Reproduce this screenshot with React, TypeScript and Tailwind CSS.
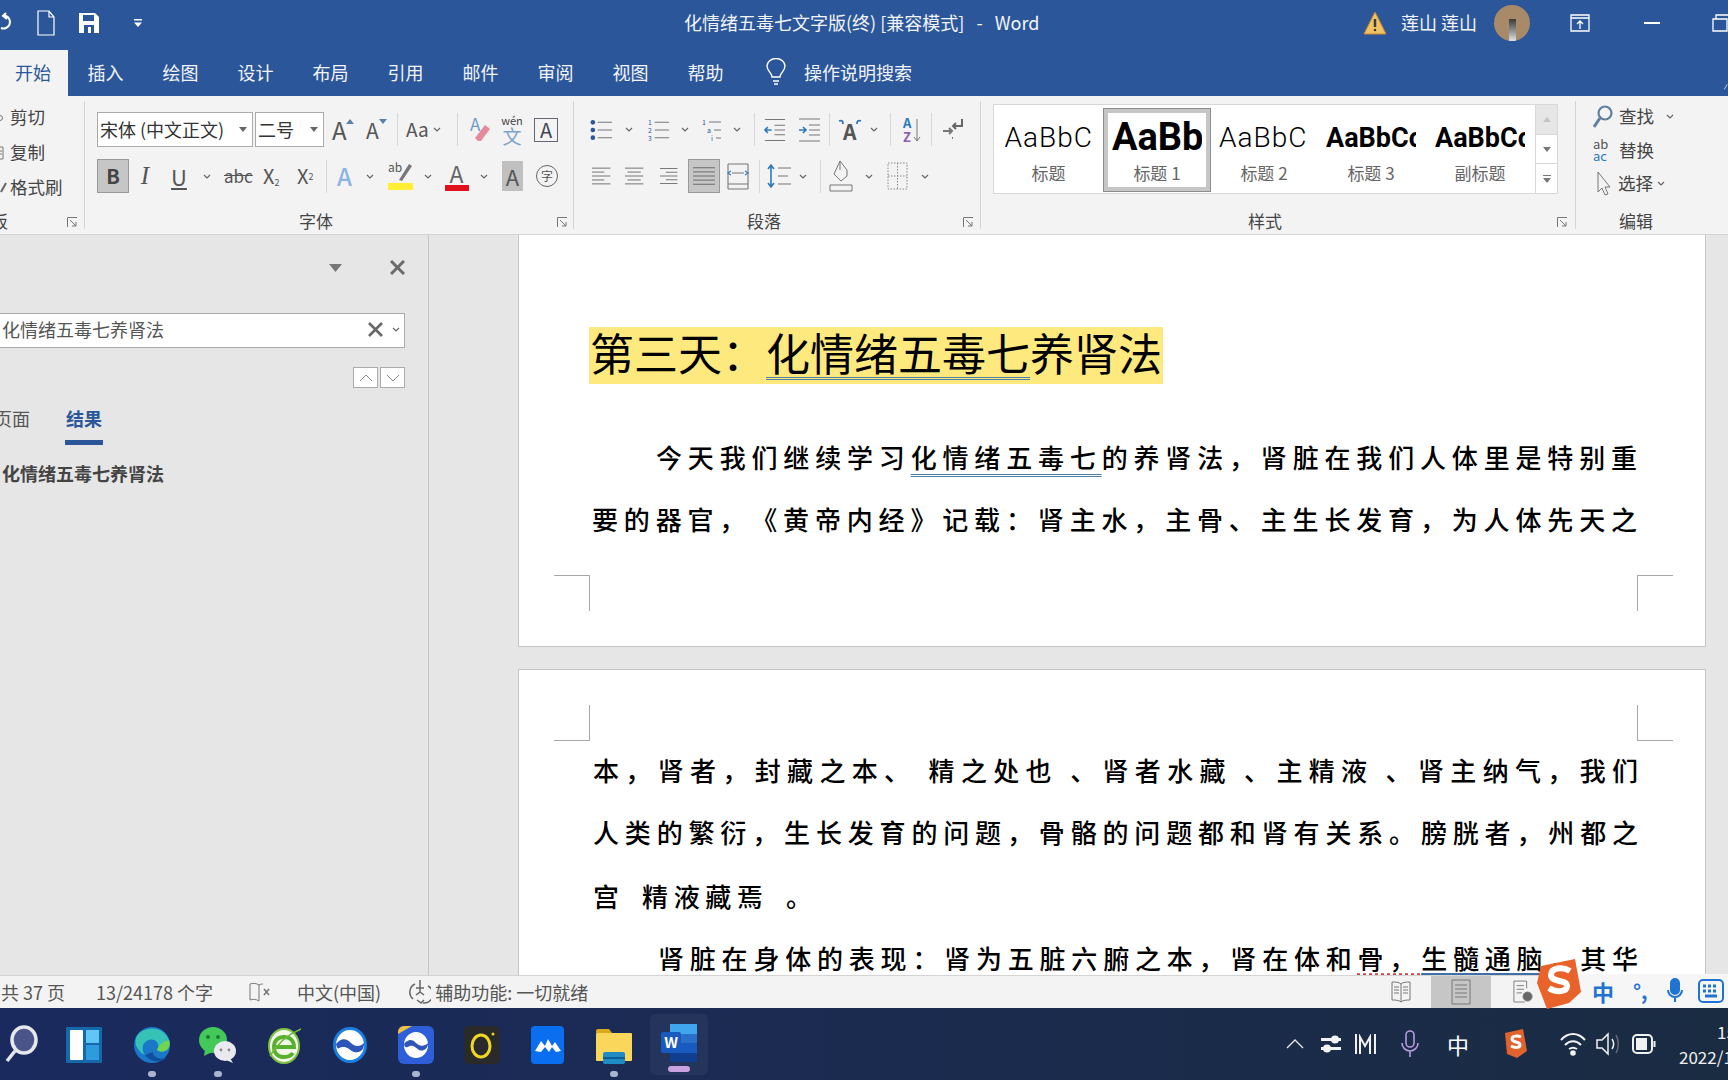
import type { ReactNode } from 'react'

const TABS = ['插入', '绘图', '设计', '布局', '引用', '邮件', '审阅', '视图', '帮助']

function Chev({ className = '' }: { className?: string }) {
  return (
    <svg viewBox="0 0 8 5" className={`h-[5px] w-[8px] shrink-0 ${className}`} fill="none" stroke="#666" strokeWidth="1.2">
      <path d="M1 1l3 3 3-3" />
    </svg>
  )
}

function Sep({ className = '' }: { className?: string }) {
  return <div className={`h-[33px] w-px shrink-0 bg-[#d8d8d8] ${className}`} />
}

function Launcher({ className = '' }: { className?: string }) {
  return (
    <svg viewBox="0 0 11 11" className={`absolute bottom-[6px] h-[11px] w-[11px] ${className}`} fill="none" stroke="#777" strokeWidth="1">
      <path d="M.5 10V.5H10M3 3l6 6M9 5v4H5" />
    </svg>
  )
}

function GroupLabel({ children, className = '' }: { children: ReactNode; className?: string }) {
  return <div className={`mt-auto h-[28px] text-[17px] leading-[30px] text-[#444] ${className}`}>{children}</div>
}

// rows of short lines, used for all the paragraph buttons
function Lines({ rows, className = '', x = 0 }: { rows: number[][]; className?: string; x?: number }) {
  return (
    <svg viewBox="0 0 24 22" className={`h-[22px] shrink-0 ${className}`} fill="none" stroke="#6e6e6e" strokeWidth="1.1">
      {rows.map(([a, b], i) => (
        <path key={i} d={`M${a + x} ${2 + i * (18 / (rows.length - 1))}H${b + x}`} />
      ))}
    </svg>
  )
}

function ListIcon({ kind }: { kind: 'b' | 'n' | 'm' }) {
  return (
    <svg viewBox="0 0 24 26" className="h-[26px] w-full" fill="none" stroke="#777" strokeWidth="1.1">
      {kind === 'm' ? (
        <>
          <path d="M7 5h12M12 13h7M14 21h5" />
          <text x="0" y="8" fontSize="7" fill="#2b579a" stroke="none">1</text>
          <text x="5" y="16" fontSize="7" fill="#2b579a" stroke="none">a</text>
          <text x="9" y="24" fontSize="7" fill="#2b579a" stroke="none">i</text>
        </>
      ) : (
        <>
          <path d="M8 5h15M8 13h15M8 21h15" />
          {kind === 'b' ? (
            <g fill="#2b579a" stroke="none">
              <circle cx="3" cy="5" r="2.4" />
              <circle cx="3" cy="13" r="2.4" />
              <circle cx="3" cy="21" r="2.4" />
            </g>
          ) : (
            <g fill="#2b579a" stroke="none" fontSize="7">
              <text x="1" y="8">1</text>
              <text x="1" y="16">2</text>
              <text x="1" y="24">3</text>
            </g>
          )}
        </>
      )}
    </svg>
  )
}

function IndentIcon({ dir }: { dir: 'l' | 'r' }) {
  return (
    <svg viewBox="0 0 24 26" className="h-[26px] w-full" fill="none" stroke="#777" strokeWidth="1.1">
      <path d="M2 2h21M12 8h11M12 13h11M12 18h11M2 24h21" />
      {dir === 'l' ? (
        <path d="M9 13H2m3-3-3 3 3 3" stroke="#2b78c0" strokeWidth="1.6" />
      ) : (
        <path d="M2 13h7m-3-3 3 3-3 3" stroke="#2b78c0" strokeWidth="1.6" />
      )}
    </svg>
  )
}

function Corner({ className = '', edges }: { className?: string; edges: string }) {
  return <div className={`absolute h-[36px] w-[36px] border-[#a8a8a8] ${edges} ${className}`} />
}

function Gallery({ sample, label, selected, w, className = '' }: { sample: string; label: string; selected?: boolean; w: string; className?: string }) {
  return (
    <div className={`flex flex-col items-center overflow-hidden ${w} ${selected ? 'my-[3px] h-[84px] border-[1px] border-[#8d8d8d] outline-[4px] -outline-offset-[5px] outline-[#c6c6c6]' : 'h-[90px]'}`}>
      <div className={`flex w-[90px] items-center justify-center overflow-hidden whitespace-nowrap text-black font-['Roboto',sans-serif] ${selected ? 'mt-[7px] h-[42px]' : 'mt-[10px] h-[46px]'} ${className}`}>
        <span className="w-[90px] overflow-hidden text-left">{sample}</span>
      </div>
      <div className={`text-[17px] leading-[24px] text-[#666] ${selected ? 'mt-[3px]' : 'mt-0'}`}>{label}</div>
    </div>
  )
}

function TaskDot({ show }: { show?: boolean }) {
  return <div className={`mt-[7px] h-[6px] w-[8px] rounded-full ${show ? 'bg-[#a9b4cf]' : 'bg-transparent'}`} />
}

function TaskItem({ children, dot, wide }: { children: ReactNode; dot?: boolean; wide?: boolean }) {
  return (
    <div className={`flex h-[72px] flex-col items-center pt-[18px] ${wide ? 'w-[68px] pr-[2px]' : 'w-[66px]'}`}>
      <div className="flex h-[38px] w-[38px] items-center justify-center">{children}</div>
      <TaskDot show={dot} />
    </div>
  )
}

function Ribbon() {
  return (
    <div className="flex h-[139px] border-b border-[#d4d4d4] bg-[#f3f3f3] text-[#444]">
      {/* clipboard */}
      <div className="relative flex w-[84px] flex-col">
        <div className="mt-[4px] flex flex-col">
          <div className="flex h-[35px] items-center pl-[10px] text-[17.5px]">
            <svg viewBox="0 0 4 8" className="absolute left-0 h-[8px] w-[4px]" fill="none" stroke="#777"><circle cx="0" cy="4" r="2.5" /></svg>
            剪切
          </div>
          <div className="flex h-[35px] items-center pl-[10px] text-[17.5px]">
            <svg viewBox="0 0 4 14" className="absolute left-0 h-[14px] w-[4px]" fill="none" stroke="#777"><path d="M0 1h3v12H0M0 5h2M0 8h2" /></svg>
            复制
          </div>
          <div className="flex h-[35px] items-center pl-[10px] text-[17.5px]">
            <svg viewBox="0 0 7 12" className="absolute left-0 h-[12px] w-[7px]" fill="none" stroke="#666" strokeWidth="2"><path d="M6 1 1 10" /></svg>
            格式刷
          </div>
        </div>
        <GroupLabel className="-ml-[26px]">贴板</GroupLabel>
        <Launcher className="right-[6px]" />
      </div>
      <div className="my-[5px] w-px bg-[#d4d4d4]" />

      {/* font */}
      <div className="relative flex w-[488px] flex-col pt-[16px]">
        <div className="flex h-[35px] items-center pl-[12px]">
          <div className="flex h-[35px] w-[156px] shrink-0 items-center justify-between border border-[#ababab] bg-white pl-[2px] pr-[5px] text-[18px] text-[#333]">
            <span className="whitespace-nowrap">宋体 (中文正文)</span>
            <svg viewBox="0 0 8 5" className="h-[5px] w-[8px]" fill="#666"><path d="M0 0h8L4 5z" /></svg>
          </div>
          <div className="ml-[2px] flex h-[35px] w-[69px] shrink-0 items-center justify-between border border-[#ababab] bg-white pl-[2px] pr-[5px] text-[18px] text-[#333]">
            <span>二号</span>
            <svg viewBox="0 0 8 5" className="h-[5px] w-[8px]" fill="#666"><path d="M0 0h8L4 5z" /></svg>
          </div>
          <div className="relative ml-[8px] w-[26px] text-[24px] leading-[30px] text-[#555]">
            A<svg viewBox="0 0 8 5" className="absolute left-[14px] top-[4px] h-[5px] w-[8px]" fill="#5a7fa8"><path d="M4 0l4 5H0z" /></svg>
          </div>
          <div className="relative ml-[8px] w-[22px] text-[21px] leading-[30px] text-[#555]">
            A<svg viewBox="0 0 8 5" className="absolute left-[13px] top-[4px] h-[5px] w-[8px]" fill="#5a7fa8"><path d="M0 0h8L4 5z" /></svg>
          </div>
          <Sep className="ml-[9px]" />
          <div className="ml-[8px] flex w-[37px] items-center gap-[4px] text-[19px] text-[#555]">
            <span>Aa</span>
            <Chev />
          </div>
          <Sep className="ml-[14px]" />
          <svg viewBox="0 0 22 28" className="ml-[11px] h-[28px] w-[22px] shrink-0">
            <text x="1" y="15" fontSize="17" fill="#6f9bc9">A</text>
            <path d="M6 22 16 9l5 4-9 12H9z" fill="#e58a9c" />
          </svg>
          <div className="ml-[10px] flex w-[22px] flex-col items-center leading-none">
            <span className="text-[11px] text-[#444]">wén</span>
            <span className="text-[19px] leading-[19px] text-[#7ba3cc]">文</span>
          </div>
          <div className="ml-[11px] flex h-[24px] w-[24px] items-center justify-center border border-[#667] text-[20px] text-[#445]">A</div>
        </div>
        <div className="mt-[12px] flex h-[34px] items-center pl-[12px] text-[#555]">
          <div className="flex h-[34px] w-[32px] shrink-0 items-center justify-center border border-[#999] bg-[#c6c6c6] text-[20px] font-bold text-[#444]">B</div>
          <div className="ml-[8px] w-[16px] text-center font-['Liberation_Serif',serif] text-[25px] italic">I</div>
          <div className="ml-[18px] w-[16px] text-center text-[22px] underline underline-offset-2">U</div>
          <Chev className="ml-[16px]" />
          <div className="ml-[13px] w-[25px] text-center text-[17px] line-through">abc</div>
          <div className="ml-[14px] w-[20px] text-[20px]">X<sub className="text-[9px]">2</sub></div>
          <div className="ml-[14px] w-[20px] text-[20px]">X<sup className="text-[9px]">2</sup></div>
          <Sep className="ml-[9px]" />
          <div className="ml-[10px] w-[19px] text-[24px] font-medium text-[#8cb5e4]">A</div>
          <Chev className="ml-[10px]" />
          <svg viewBox="0 0 25 34" className="ml-[14px] h-[34px] w-[25px] shrink-0">
            <text x="0" y="13" fontSize="12" fill="#555">ab</text>
            <path d="M11 21 21 5l3 2-10 15z" fill="#777" />
            <rect x="0" y="24" width="25" height="7" fill="#ffee33" />
          </svg>
          <Chev className="ml-[11px]" />
          <div className="ml-[12px] flex w-[25px] flex-col items-center">
            <span className="text-[23px] leading-[24px] text-[#666]">A</span>
            <span className="h-[6px] w-[24px] bg-[#e0101c]" />
          </div>
          <Chev className="ml-[11px]" />
          <div className="ml-[14px] flex h-[30px] w-[21px] items-center justify-center bg-[#c0c0c0] text-[22px] text-[#555]">A</div>
          <div className="ml-[13px] flex h-[22px] w-[22px] items-center justify-center rounded-full border border-[#666] text-[12px]">字</div>
        </div>
        <GroupLabel className="pr-[26px] text-center">字体</GroupLabel>
        <Launcher className="right-[5px]" />
      </div>
      <div className="my-[5px] w-px bg-[#d4d4d4]" />

      {/* paragraph */}
      <div className="relative flex w-[406px] flex-col pt-[16px]">
        <div className="flex h-[35px] items-center pl-[16px]">
          <div className="w-[23px]"><ListIcon kind="b" /></div>
          <Chev className="ml-[12px]" />
          <div className="ml-[14px] w-[23px]"><ListIcon kind="n" /></div>
          <Chev className="ml-[11px]" />
          <div className="ml-[13px] w-[24px]"><ListIcon kind="m" /></div>
          <Chev className="ml-[7px]" />
          <Sep className="ml-[13px]" />
          <div className="ml-[8px] w-[23px]"><IndentIcon dir="l" /></div>
          <div className="ml-[11px] w-[24px]"><IndentIcon dir="r" /></div>
          <Sep className="ml-[8px]" />
          <svg viewBox="0 0 26 24" className="ml-[7px] h-[24px] w-[26px] shrink-0">
            <text x="6" y="22" fontSize="21" fontWeight="700" fill="#555">A</text>
            <path d="M2 3c3-1 4 0 4 3M24 3c-3-1-4 0-4 3" fill="none" stroke="#2b78c0" strokeWidth="1.8" />
          </svg>
          <Chev className="ml-[7px]" />
          <Sep className="ml-[12px]" />
          <svg viewBox="0 0 20 30" className="ml-[11px] h-[30px] w-[20px] shrink-0">
            <text x="1" y="13" fontSize="13" fontWeight="700" fill="#2b78c0">A</text>
            <text x="1" y="27" fontSize="13" fontWeight="700" fill="#8a5fb0">Z</text>
            <path d="M15 4v22m-3-4 3 4 3-4" fill="none" stroke="#777" />
          </svg>
          <Sep className="ml-[9px]" />
          <svg viewBox="0 0 21 26" className="ml-[10px] h-[26px] w-[21px] shrink-0" fill="none" stroke="#666" strokeWidth="2">
            <path d="M20 2v7H11m3-3-3 3 3 3" />
            <path d="M1 14h9m-3-3 3 3-3 3M11 21h-1" stroke="#777" />
          </svg>
        </div>
        <div className="mt-[12px] flex h-[34px] items-center pl-[18px]">
          <Lines className="w-[21px]" rows={[[0, 21], [0, 14], [0, 21], [0, 14], [0, 21]]} />
          <Lines className="ml-[12px] w-[21px]" rows={[[0, 21], [3, 18], [0, 21], [3, 18], [0, 21]]} />
          <Lines className="ml-[14px] w-[20px]" rows={[[0, 21], [7, 21], [0, 21], [7, 21], [0, 21]]} />
          <div className="ml-[8px] flex h-[34px] w-[32px] shrink-0 items-center justify-center border border-[#999] bg-[#c6c6c6]">
            <Lines className="w-[22px]" rows={[[0, 24], [0, 24], [0, 24], [0, 24], [0, 24]]} />
          </div>
          <svg viewBox="0 0 22 28" className="ml-[7px] h-[28px] w-[22px] shrink-0" fill="none" stroke="#777" strokeWidth="1.1">
            <path d="M1 2h20M1 27h20M1 2v25M21 2v25M1 22h20M5 11h12" />
            <path d="M4 9 1 11l3 2M18 9l3 2-3 2" stroke="#2b78c0" />
          </svg>
          <Sep className="ml-[10px]" />
          <svg viewBox="0 0 24 28" className="ml-[7px] h-[28px] w-[24px] shrink-0" fill="none" stroke="#777" strokeWidth="1.1">
            <path d="M11 6h13M11 14h10M11 22h13" />
            <path d="M4 3v22M1 7l3-4 3 4M1 21l3 4 3-4" stroke="#2b78c0" strokeWidth="1.6" />
          </svg>
          <Chev className="ml-[8px]" />
          <Sep className="ml-[13px]" />
          <svg viewBox="0 0 24 32" className="ml-[8px] h-[32px] w-[24px] shrink-0" fill="none" stroke="#777">
            <path d="M11 1l7 9v6l-6 5-7-7z" />
            <path d="M11 1v9" />
            <path d="M1 25h22v6H1z" fill="#f3f3f3" />
          </svg>
          <Chev className="ml-[12px]" />
          <svg viewBox="0 0 21 28" className="ml-[14px] h-[28px] w-[21px] shrink-0" fill="none" stroke="#888" strokeDasharray="1.5 1.5">
            <path d="M1 1h19v26H1zM10.5 1v26M1 14h19" />
          </svg>
          <Chev className="ml-[13px]" />
        </div>
        <GroupLabel className="pr-[26px] text-center">段落</GroupLabel>
        <Launcher className="right-[6px]" />
      </div>
      <div className="my-[5px] w-px bg-[#d4d4d4]" />

      {/* styles */}
      <div className="relative flex w-[594px] flex-col pl-[12px] pt-[8px]">
        <div className="flex h-[90px] w-[565px] border border-[#d8d8d8] bg-white">
          <Gallery w="w-[109px]" sample="AaBbC" label="标题" className="pl-[1px] text-[28px] font-light tracking-[1px]" />
          <Gallery w="w-[108px]" sample="AaBbb" label="标题 1" selected className="text-[38px] font-bold" />
          <Gallery w="w-[106px]" sample="AaBbC" label="标题 2" className="text-[28px] font-light tracking-[1px]" />
          <Gallery w="w-[108px]" sample="AaBbCc" label="标题 3" className="text-[27px] font-bold" />
          <Gallery w="w-[110px]" sample="AaBbCc" label="副标题" className="text-[27px] font-bold" />
          <div className="ml-auto flex w-[22px] flex-col border-l border-[#d8d8d8]">
            <div className="flex flex-1 items-center justify-center bg-[#e6e6e6]">
              <svg viewBox="0 0 8 5" className="h-[5px] w-[8px]" fill="#c4c4c4"><path d="M4 0l4 5H0z" /></svg>
            </div>
            <div className="flex flex-1 items-center justify-center border-y border-[#d8d8d8]">
              <svg viewBox="0 0 8 5" className="h-[5px] w-[8px]" fill="#777"><path d="M0 0h8L4 5z" /></svg>
            </div>
            <div className="flex flex-1 items-center justify-center">
              <svg viewBox="0 0 8 8" className="h-[8px] w-[8px]" fill="#777"><path d="M0 0h8v1H0zM0 3h8L4 8z" /></svg>
            </div>
          </div>
        </div>
        <GroupLabel className="pr-[38px] text-center">样式</GroupLabel>
        <Launcher className="right-[7px]" />
      </div>
      <div className="my-[5px] w-px bg-[#d4d4d4]" />

      {/* editing */}
      <div className="flex w-[124px] flex-col pt-[4px]">
        <div className="flex h-[33px] items-center pl-[17px] text-[17.5px]">
          <svg viewBox="0 0 20 24" className="h-[24px] w-[20px] shrink-0" fill="none" stroke="#5f7f9f" strokeWidth="2.2"><circle cx="12" cy="8" r="6.5" /><path d="M7 13 1 22" strokeWidth="3" /></svg>
          <span className="ml-[6px]">查找</span>
          <Chev className="ml-[12px]" />
        </div>
        <div className="flex h-[34px] items-center pl-[17px] text-[17.5px]">
          <div className="flex w-[22px] flex-col text-[13px] leading-[12px] text-[#555]">
            <span>ab</span>
            <span className="text-[#2b78c0]">ac</span>
          </div>
          <span className="ml-[4px]">替换</span>
        </div>
        <div className="flex h-[33px] items-center pl-[21px] text-[17.5px]">
          <svg viewBox="0 0 14 26" className="h-[26px] w-[14px] shrink-0" fill="#f3f3f3" stroke="#777"><path d="M1 1v20l4-4 3 7 3-1-3-7h5z" /></svg>
          <span className="ml-[7px]">选择</span>
          <Chev className="ml-[4px]" />
        </div>
        <GroupLabel className="pl-[43px]">编辑</GroupLabel>
      </div>
    </div>
  )
}

function Sidebar() {
  return (
    <div className="flex w-[429px] shrink-0 flex-col border-r border-[#c6c6c6] bg-[#e6e6e6]">
      <div className="flex h-[78px] items-start justify-end pr-[23px] pt-[25px]">
        <svg viewBox="0 0 13 8" className="mr-[48px] mt-[4px] h-[8px] w-[13px]" fill="#777"><path d="M0 0h13L6.500 8z" /></svg>
        <svg viewBox="0 0 15 15" className="h-[15px] w-[15px]" fill="none" stroke="#6b6b6b" strokeWidth="3"><path d="M1 1l13 13M14 1 1 14" /></svg>
      </div>
      <div className="flex h-[35px] w-[405px] items-center border border-l-0 border-[#ababab] bg-white pb-[2px] pl-[2px] text-[18px] text-[#555]">
        <span>化情绪五毒七养肾法</span>
        <svg viewBox="0 0 15 15" className="ml-auto h-[15px] w-[15px]" fill="none" stroke="#666" strokeWidth="2.6"><path d="M1 1l13 13M14 1 1 14" /></svg>
        <Chev className="ml-[9px] mr-[4px]" />
      </div>
      <div className="mt-[19px] flex w-[405px] justify-end gap-[2px]">
        <div className="flex h-[21px] w-[25px] items-center justify-center border border-[#ababab] bg-white">
          <svg viewBox="0 0 14 8" className="h-[8px] w-[14px]" fill="none" stroke="#888"><path d="M1 7l6-6 6 6" /></svg>
        </div>
        <div className="flex h-[21px] w-[25px] items-center justify-center border border-[#ababab] bg-white">
          <svg viewBox="0 0 14 8" className="h-[8px] w-[14px]" fill="none" stroke="#888"><path d="M1 1l6 6 6-6" /></svg>
        </div>
      </div>
      <div className="mt-[17px] flex h-[40px] items-start overflow-hidden text-[18px] leading-[26px]">
        <span className="-ml-[6px] w-[71px] text-[#555]">页面</span>
        <span className="h-[40px] w-[38px] border-b-[5px] border-[#2b579a] text-center font-bold text-[#2b579a]">结果</span>
      </div>
      <div className="mt-[15px] pl-[2px] text-[18px] font-bold leading-[26px] text-[#444]">化情绪五毒七养肾法</div>
    </div>
  )
}

function Doc() {
  const line = 'h-[62px] text-[26px] font-medium leading-[62px] text-black text-justify [text-align-last:justify] [text-spacing-trim:space-all]'
  return (
    <div className="flex-1 overflow-hidden bg-[#e6e6e6] pl-[89px]">
      <div className="relative h-[412px] w-[1188px] border-x border-b border-[#c6c6c6] bg-white pl-[73px] pt-[92px]">
        <div className="-ml-[3px] h-[57px] w-[574px] whitespace-nowrap bg-[#fee97f] pl-[1px] text-[44px] leading-[51px] text-black">
          第三天&#xFF1A;<span className="underline decoration-[#4f7ea6] decoration-double decoration-1 underline-offset-[6px]">化情绪五毒七</span>养肾法
        </div>
        <div className="mt-[42px] w-[1045px]">
          <div className={`${line} pl-[64px]`}>
            今天我们继续学习<span className="underline decoration-[#4f7ea6] decoration-double decoration-1 underline-offset-[6px]">化情绪五毒七</span>的养肾法&#xFF0C;肾脏在我们人体里是特别重
          </div>
          <div className={line}>要的器官&#xFF0C;《黄帝内经》记载&#xFF1A;肾主水&#xFF0C;主骨、主生长发育&#xFF0C;为人体先天之</div>
        </div>
        <Corner edges="border-r border-t" className="left-[35px] top-[340px]" />
        <Corner edges="border-l border-t" className="left-[1118px] top-[340px]" />
      </div>
      <div className="relative mt-[22px] h-[400px] w-[1188px] border-x border-t border-[#c6c6c6] bg-white pl-[74px] pt-[69px]">
        <Corner edges="border-b border-r" className="left-[35px] top-[35px]" />
        <Corner edges="border-b border-l" className="left-[1118px] top-[35px]" />
        <div className="w-[1045px]">
          <div className={line}>本&#xFF0C;肾者&#xFF0C;封藏之本、 精之处也 、肾者水藏 、主精液 、肾主纳气&#xFF0C;我们</div>
          <div className={line}>人类的繁衍&#xFF0C;生长发育的问题&#xFF0C;骨骼的问题都和肾有关系。膀胱者&#xFF0C;州都之</div>
          <div className="mt-[2px] h-[62px] text-[26px] font-medium leading-[62px] tracking-[5.6px] text-black [word-spacing:6px]">宫 精液藏焉 。</div>
          <div className={`${line} pl-[65px]`}>
            肾脏在身体的表现&#xFF1A;肾为五脏六腑之本&#xFF0C;肾在体和<span className="underline decoration-[#d04040] decoration-dotted underline-offset-[4px]">骨&#xFF0C;</span><span className="underline decoration-[#3f6fa6] underline-offset-[4px]">生髓通脑</span>&#xFF0C;其华
          </div>
        </div>
      </div>
    </div>
  )
}

function StatusBar() {
  return (
    <div className="relative flex h-[33px] items-center border-t border-[#d4d4d4] bg-[#f3f3f3] text-[18px] text-[#555]">
      <span className="w-[96px] pl-[1px]">共 37 页</span>
      <span className="w-[153px]">13/24178 个字</span>
      <svg viewBox="0 0 22 20" className="h-[20px] w-[22px]" fill="none" stroke="#777"><path d="M1 2c3-1 6-1 9 1v16c-3-2-6-2-9-1zM10 3c2-1 3-1 4-1" /><path d="M15 7l5 6m0-6-5 6" stroke="#777" strokeWidth="1.6" /></svg>
      <span className="ml-[26px]">中文(中国)</span>
      <svg viewBox="0 0 22 26" className="ml-[28px] h-[26px] w-[22px]" fill="none" stroke="#666" strokeWidth="1.5"><path d="M6 5a9 9 0 0 0-2 15m10 4a9 9 0 0 0 5-17" /><path d="M11 1v12l-4 3m4-3 4 3M7 9h8M8 21l4 3 3-3" /></svg>
      <span className="ml-[4px]">辅助功能: 一切就绪</span>
      <div className="ml-auto mr-[195px] flex h-full items-center">
        <svg viewBox="0 0 20 24" className="h-[24px] w-[20px]" fill="none" stroke="#777"><path d="M1 2c3 0 7 0 9 2 2-2 6-2 9-2v18c-3 0-7 0-9 2-2-2-6-2-9-2zM10 4v18M3 7h5M3 10h5M3 13h5M12 7h5M12 10h5M12 13h5" /></svg>
        <div className="ml-[20px] flex h-full w-[60px] items-center justify-center bg-[#c6c6c6]">
          <svg viewBox="0 0 20 26" className="h-[26px] w-[20px]" fill="none" stroke="#777"><path d="M1 1h18v24H1zM4 6h12M4 10h12M4 14h12M4 18h12" /></svg>
        </div>
        <svg viewBox="0 0 22 26" className="ml-[22px] h-[26px] w-[20px]" fill="none" stroke="#777"><path d="M13 24H1V1h14v8M4 6h8M4 10h8M4 14h6" /><circle cx="16" cy="18" r="5" fill="#666" /></svg>
      </div>
      {/* IME toolbar floats over the status bar */}
      <div className="absolute -top-[2px] right-0 flex h-[34px] w-[175px] items-center rounded-tl-[4px] bg-[#f6f6f6]">
        <span className="ml-[39px] shrink-0 text-[22px] font-bold leading-none text-[#1f74d2]">中</span>
        <span className="ml-[19px] shrink-0 text-[20px] font-bold leading-none text-[#1f74d2]">°,</span>
        <svg viewBox="0 0 16 26" className="ml-[19px] h-[26px] w-[16px] shrink-0" fill="none" stroke="#1f74d2" strokeWidth="2"><rect x="4" y="1" width="8" height="15" rx="4" fill="#1f74d2" /><path d="M1 12a7 7 0 0 0 14 0M8 19v5" /></svg>
        <svg viewBox="0 0 26 24" className="ml-[15px] h-[24px] w-[26px] shrink-0"><rect x="1" y="1" width="24" height="22" rx="4" fill="none" stroke="#1f74d2" strokeWidth="2" /><path d="M5 7h3M10 7h3M15 7h3M5 12h3M10 12h3M15 12h3M7 17h12" stroke="#1f74d2" strokeWidth="3" /></svg>
      </div>
      <svg viewBox="0 0 44 50" className="absolute -top-[17px] right-[146px] h-[50px] w-[46px]">
        <path d="M4 7 38 0l6 33-12 11-22 6L0 24z" fill="#e8622a" />
        <path d="M33 12c-8-5-19-3-19 4 0 8 16 4 16 11 0 6-11 7-18 2" fill="none" stroke="#fff" strokeWidth="6" />
      </svg>
    </div>
  )
}

function Taskbar() {
  return (
    <div className="flex h-[72px] bg-linear-to-r from-[#1a2a5e] via-[#1b2b50] to-[#1a2c42] text-white">
      <div className="flex pl-[2px]">
        <div className="flex h-[72px] w-[37px] items-center justify-center">
          <svg viewBox="0 0 34 38" className="h-[38px] w-[34px]" fill="#4a5488" stroke="#e6e8ee" strokeWidth="3.5"><ellipse cx="20" cy="15" rx="12" ry="13" /><path d="M11 26 3 36" strokeWidth="3.500" /></svg>
        </div>
        <div className="w-[12px]" />
        <TaskItem wide>
          <svg viewBox="0 0 36 36" className="h-[36px] w-[36px]">
            <rect width="36" height="36" fill="#1669a8" rx="1" />
            <rect x="4" y="3" width="13" height="30" fill="#fff" rx="1" />
            <rect x="20" y="3" width="13" height="13" fill="#5fc6f5" />
            <rect x="20" y="18" width="13" height="15" fill="#2e9bdc" />
          </svg>
        </TaskItem>
        <TaskItem dot>
          <svg viewBox="0 0 38 38" className="h-[38px] w-[38px]">
            <circle cx="19" cy="19" r="18" fill="#1b78c8" />
            <path d="M3 12C8 0 30-2 36 14c3 10-6 14-12 10 4-6-2-12-8-10-7 2-8 10-4 15-6-3-11-9-9-17z" fill="#37c2b8" />
            <path d="M36 14c3 10-6 14-12 10 2-6 6-8 12-10z" fill="#6fd64f" />
            <path d="M12 29c4 6 14 9 22 3-9 2-14-1-14-6z" fill="#0f4f9e" />
          </svg>
        </TaskItem>
        <TaskItem dot>
          <svg viewBox="0 0 38 38" className="h-[38px] w-[38px]">
            <ellipse cx="14" cy="14" rx="14" ry="13" fill="#43c85a" />
            <path d="M6 23l-1 7 8-4z" fill="#43c85a" />
            <circle cx="9" cy="11" r="2" fill="#1f7a33" />
            <circle cx="19" cy="11" r="2" fill="#1f7a33" />
            <ellipse cx="26" cy="25" rx="11" ry="10" fill="#e9e9ee" />
            <path d="M31 32l3 5-7-3z" fill="#e9e9ee" />
            <circle cx="22" cy="24" r="1.400" fill="#888" />
            <circle cx="30" cy="24" r="1.400" fill="#888" />
          </svg>
        </TaskItem>
        <TaskItem>
          <svg viewBox="0 0 38 38" className="h-[38px] w-[38px]">
            <ellipse cx="19" cy="20" rx="15" ry="17" fill="#f2f8e8" stroke="#7fc241" strokeWidth="2" />
            <path d="M9 21h20c0-6-4-10-10-10S9 15 9 21c0 6 4 10 10 10 4 0 7-1 9-4" fill="none" stroke="#58b12e" strokeWidth="4" />
            <path d="M5 30C12 18 24 8 36 3" fill="none" stroke="#6eb83a" strokeWidth="1.500" />
          </svg>
        </TaskItem>
        <TaskItem>
          <svg viewBox="0 0 36 38" className="h-[38px] w-[36px]">
            <ellipse cx="18" cy="19" rx="17" ry="18" fill="#1a7fe0" />
            <ellipse cx="18" cy="19" rx="14" ry="15" fill="#fff" />
            <path d="M4 18c6-7 11-5 15-1s9 4 13 0c0 9-6 12-11 9-4-3-7-6-11-4-3 1-5 2-6-4z" fill="#2f55b8" />
            <path d="M6 23c5-4 9-1 13 2 5 2 9 2 12-2-2 7-8 11-13 11-6 0-10-5-12-11z" fill="#fff" />
          </svg>
        </TaskItem>
        <TaskItem dot>
          <svg viewBox="0 0 36 38" className="h-[38px] w-[36px]">
            <rect width="36" height="38" rx="6" fill="#2f5fd8" />
            <path d="M0 8V6a6 6 0 0 1 6-6h8z" fill="#f0c040" />
            <ellipse cx="18" cy="19" rx="12" ry="13" fill="#fff" />
            <path d="M6 18c5-6 9-4 12-1s8 4 12 0c0 6-5 9-9 7-4-3-6-5-9-4-3 1-5 3-6-2z" fill="#2f55b8" />
          </svg>
        </TaskItem>
        <TaskItem>
          <svg viewBox="0 0 36 38" className="h-[38px] w-[36px]">
            <rect width="36" height="38" rx="5" fill="#2a2a2a" />
            <ellipse cx="17" cy="20" rx="9" ry="11" fill="none" stroke="#f0d820" strokeWidth="3" />
            <circle cx="29" cy="8" r="1.500" fill="#f0d820" />
          </svg>
        </TaskItem>
        <TaskItem>
          <svg viewBox="0 0 34 38" className="h-[38px] w-[34px]">
            <rect width="33" height="38" rx="4" fill="#0a6ef0" />
            <path d="M4 25l6-10 4 5 3-7 4 7 3-4 6 9-5 1-4-5-3 5-4-5-4 5z" fill="#fff" />
          </svg>
        </TaskItem>
        <TaskItem dot>
          <svg viewBox="0 0 36 38" className="h-[38px] w-[36px]">
            <path d="M0 5a2 2 0 0 1 2-2h11l3 4h-16z" fill="#dca81e" />
            <rect x="0" y="7" width="36" height="28" rx="1" fill="#fad75a" />
            <rect x="7" y="26" width="22" height="12" rx="2" fill="#1f8ac4" />
            <rect x="7" y="31" width="22" height="2" fill="#0c5d96" />
          </svg>
        </TaskItem>
        <div className="ml-[3px] flex h-[61px] w-[58px] flex-col items-center self-center rounded-[6px] bg-[#ffffff0c] pt-[10px]">
          <svg viewBox="0 0 36 38" className="h-[38px] w-[36px]">
            <rect x="9" y="0" width="27" height="38" rx="2" fill="#2a6fc9" />
            <rect x="9" y="0" width="27" height="10" fill="#41a5ee" />
            <rect x="9" y="19" width="27" height="10" fill="#185abd" />
            <rect x="9" y="29" width="27" height="9" fill="#103f91" />
            <rect x="0" y="8" width="20" height="21" rx="2" fill="#185abd" />
            <text x="10" y="24" textAnchor="middle" fontSize="15" fontWeight="700" fill="#fff">W</text>
          </svg>
          <div className="mt-[4px] h-[6px] w-[22px] rounded-full bg-[#c9a3e0]" />
        </div>
      </div>

      {/* tray */}
      <div className="ml-auto flex h-full items-center overflow-hidden">
        <svg viewBox="0 0 18 10" className="h-[10px] w-[18px]" fill="none" stroke="#e8e8e8" strokeWidth="1.3"><path d="M1 9l8-8 8 8" /></svg>
        <svg viewBox="0 0 20 20" className="ml-[17px] h-[20px] w-[20px]" fill="#f2f2f2"><path d="M0 4h20v3H0zM0 13h20v3H0z" /><circle cx="14" cy="5.500" r="4" /><circle cx="6" cy="14.500" r="4" /></svg>
        <svg viewBox="0 0 22 20" className="ml-[14px] h-[20px] w-[22px]" fill="none" stroke="#f2f2f2" strokeWidth="2"><path d="M1 0v20M5 20V3l5 9 5-9v17M20 0v20" /></svg>
        <svg viewBox="0 0 18 28" className="ml-[24px] h-[28px] w-[18px]" fill="none" stroke="#b89ade" strokeWidth="1.6"><rect x="5" y="1" width="8" height="16" rx="4" /><path d="M1 13a8 8 0 0 0 16 0M9 21v6" /></svg>
        <span className="ml-[27px] w-[24px] text-center text-[22px] leading-none">中</span>
        <svg viewBox="0 0 24 30" className="ml-[33px] h-[30px] w-[24px]"><path d="M2 4 20 0l4 22-10 7-10-4z" fill="#e0622c" /><path d="M18 8c-4-2-9-1-9 2 0 4 8 2 8 6 0 3-5 3-9 1" fill="none" stroke="#fff" strokeWidth="3" /></svg>
        <svg viewBox="0 0 26 24" className="ml-[33px] h-[24px] w-[26px]" fill="none" stroke="#f2f2f2" strokeWidth="2"><path d="M1 8c7-8 17-8 24 0M5 13c5-5 11-5 16 0M9 17c3-2 5-2 8 0" /><circle cx="13" cy="21" r="1.800" fill="#f2f2f2" /></svg>
        <svg viewBox="0 0 24 26" className="ml-[10px] h-[26px] w-[24px]" fill="none" stroke="#f2f2f2" strokeWidth="1.5"><path d="M1 9h5l6-6v20l-6-6H1z" /><path d="M16 8c2 3 2 7 0 10" /><path d="M20 4c3 5 3 13 0 18" stroke="#667" /></svg>
        <svg viewBox="0 0 24 20" className="ml-[12px] h-[20px] w-[24px]" fill="none" stroke="#f2f2f2" strokeWidth="2"><rect x="1" y="1" width="19" height="18" rx="4" /><rect x="4" y="4" width="11" height="12" fill="#f2f2f2" stroke="none" /><path d="M22.500 7v6" /></svg>
        <div className="ml-[23px] w-[49px] whitespace-nowrap text-[17px] leading-[25px] text-[#f0f0f0]">
          <div className="pl-[38px]">15:32</div>
          <div>2022/10/12</div>
        </div>
      </div>
    </div>
  )
}

export default function App() {
  return (
    <div className="flex h-[1080px] w-[1728px] flex-col overflow-hidden bg-[#e6e6e6] font-['Noto_Sans_CJK_SC',sans-serif]">
      {/* title bar */}
      <div className="flex h-[50px] items-center bg-[#2b579a] pb-[5px] text-[18px] text-[#f2f4f8]">
        <div className="flex w-[684px] shrink-0 items-center">
          <svg viewBox="0 0 13 22" className="h-[22px] w-[13px]" fill="none" stroke="#fff" strokeWidth="2"><path d="M6 1 3 4l4 3M3 4h3a6.500 6.500 0 1 1-5 12" /></svg>
          <svg viewBox="0 0 18 26" className="ml-[24px] h-[26px] w-[18px]" fill="#2b579a" stroke="#fff" strokeWidth="1.2"><path d="M1 1h11l5 6v18H1zM12 1v6h5" /></svg>
          <svg viewBox="0 0 20 20" className="ml-[24px] h-[20px] w-[20px]" fill="#fff"><path d="M0 0h16l4 4v16H0zM4 2v6h11V2zM5 12v8h10v-8z" fillRule="evenodd" /><rect x="9" y="14" width="3" height="6" /></svg>
          <svg viewBox="0 0 8 8" className="ml-[35px] h-[8px] w-[8px]" fill="#fff"><path d="M0 0h8v1.500H0zM0 3.500h8L4 8z" /></svg>
        </div>
        <span className="whitespace-pre">化情绪五毒七文字版(终) [兼容模式]   -   Word</span>
        <div className="flex-1" />
        <div className="flex w-[365px] shrink-0 items-center overflow-hidden">
          <svg viewBox="0 0 24 24" className="h-[24px] w-[24px] shrink-0">
            <path d="M12 1l11 22H1z" fill="#f0c264" stroke="#c98a2c" />
            <path d="M12 8v8" stroke="#3a3a3a" strokeWidth="2.500" />
            <circle cx="12" cy="19" r="1.300" fill="#3a3a3a" />
          </svg>
          <span className="ml-[14px] shrink-0">莲山 莲山</span>
          <div className="ml-[17px] flex h-[36px] w-[36px] shrink-0 items-end justify-center overflow-hidden rounded-full bg-[#a98a68]">
            <div className="h-[22px] w-[7px] bg-linear-to-b from-[#3a3a3a] to-[#dfe6ea]" />
          </div>
          <svg viewBox="0 0 20 18" className="ml-[40px] h-[18px] w-[20px] shrink-0" fill="none" stroke="#fff" strokeWidth="1.3"><path d="M1 1h18v16H1zM1 4h18M10 15V7M7 10l3-3 3 3" /></svg>
          <div className="ml-[54px] h-[2px] w-[16px] shrink-0 bg-white" />
          <svg viewBox="0 0 16 18" className="ml-[52px] h-[18px] w-[16px] shrink-0" fill="none" stroke="#fff" strokeWidth="1.3"><path d="M1 5h14v12H1zM4 5V1h12" /></svg>
        </div>
      </div>

      {/* tab row */}
      <div className="flex h-[46px] items-center bg-[#2b579a] pb-[2px] text-[18px] text-[#f2f4f8]">
        <div className="-mb-[2px] flex h-[46px] w-[68px] items-center justify-center bg-[#f3f3f3] pb-[2px] pr-[2px] text-[#2b579a]">开始</div>
        {TABS.map((t) => (
          <div key={t} className="w-[75px] text-center">{t}</div>
        ))}
        <svg viewBox="0 0 20 28" className="ml-[23px] h-[28px] w-[20px]" fill="none" stroke="#fff" strokeWidth="1.4"><path d="M6 19c0-4-5-6-5-11a9 7.500 0 0 1 18 0c0 5-5 7-5 11zM7 23h6M8 26h4" /></svg>
        <span className="ml-[18px]">操作说明搜索</span>
        <svg viewBox="0 0 6 10" className="ml-auto mt-[30px] h-[10px] w-[4px]" fill="none" stroke="#fff"><path d="M0 9 5 1" /></svg>
      </div>

      <Ribbon />

      <div className="flex h-[740px]">
        <Sidebar />
        <Doc />
      </div>

      <StatusBar />
      <Taskbar />
    </div>
  )
}
